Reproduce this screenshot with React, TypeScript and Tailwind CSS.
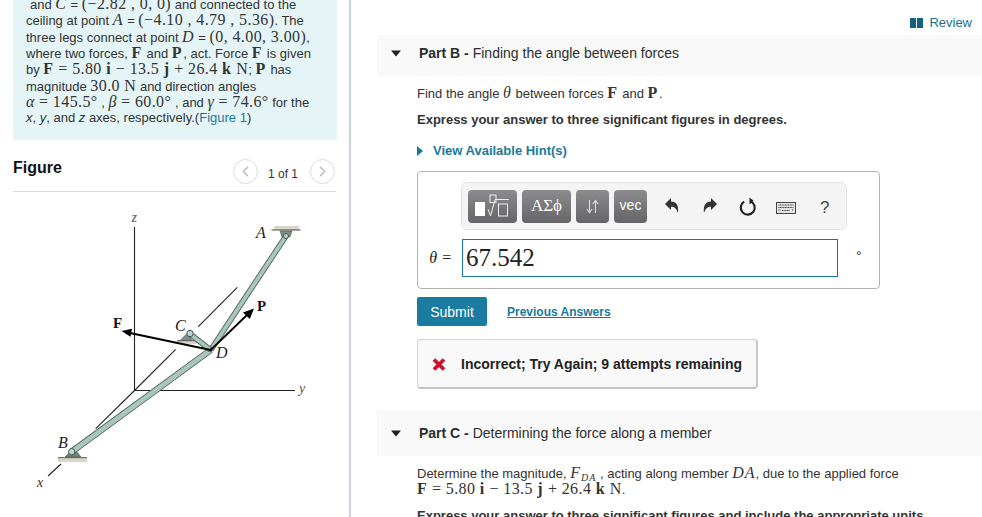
import React from "react";
import { ChevronLeft, ChevronRight } from "lucide-react";

const M = ({ children, b, i }: { children: React.ReactNode; b?: boolean; i?: boolean }) => (
  <span className={`font-['Liberation_Serif',serif] text-[16px] leading-none ${b ? "font-bold tracking-[1.6px]" : "tracking-[0.4px]"} ${i ? "italic tracking-[1px]" : ""}`}>
    {children}
  </span>
);

const Line = ({ className = "", children }: { className?: string; children: React.ReactNode }) => (
  <div className={`h-[16.33px] leading-[16.33px] ${className}`}>{children}</div>
);

const TopButton = ({ className, children }: { className: string; children: React.ReactNode }) => (
  <div className={`h-[33px] rounded-[4px] bg-gradient-to-b from-[#8c8c8e] to-[#656567] flex items-center justify-center text-white ${className}`}>
    {children}
  </div>
);

const Caret = () => (
  <svg width="12" height="7" viewBox="0 0 12 7" className="shrink-0">
    <path d="M1 0.5h10L6 6.5z" fill="#222" />
  </svg>
);

const PartHeader = ({ className, name, title }: { className: string; name: string; title: string }) => (
  <div className={`bg-[#f9f9f9] flex items-center pl-[13px] text-[14px] text-[#2d2d2d] ${className}`}>
    <Caret />
    <span className="ml-[17px]">
      <b className="font-bold">{name} - </b>
      {title}
    </span>
  </div>
);

const Figure = () => (
  <svg width="324" height="325" viewBox="13 192 324 325" className="block">
    <g stroke="#222" strokeWidth="1.1" fill="none">
      <path d="M134.5 227V390.5H295" />
      <path d="M134.5 390.5L95.7 428.7" />
      <path d="M61 464L48 476" />
      <path d="M175.7 349.3L134.5 390.5" />
      <path d="M198.3 326.7L237.3 287.3" />
    </g>
    {/* supports */}
    <rect x="274" y="226" width="25" height="4" fill="#d9d6c8" />
    <path d="M271.5 230H300.5" stroke="#444" strokeWidth="1" />
    <path d="M280 231h12l-2 6h-8z" fill="#7e8f8a" stroke="#444" strokeWidth="0.5" />
    <rect x="177" y="341" width="20" height="3" fill="#d9d6c8" />
    <path d="M177 340.7H197" stroke="#555" strokeWidth="1" />
    <path d="M180 340.5l7-7 5 7z" fill="#7e8f8a" stroke="#444" strokeWidth="0.5" />
    <rect x="58" y="458" width="29" height="4" fill="#d9d6c8" />
    <path d="M58 457.7H87" stroke="#555" strokeWidth="1" />
    <path d="M65 457l5-5h7l4 5z" fill="#6f817c" stroke="#444" strokeWidth="0.5" />
    {/* members */}
    <g fill="none">
      <path d="M71.7 451.7L210.7 350" stroke="#47594f" strokeWidth="6.5" />
      <path d="M71.7 451.7L210.7 350" stroke="#a9c6bc" strokeWidth="4.8" />
      <path d="M286 236L210.7 350" stroke="#47594f" strokeWidth="5.6" />
      <path d="M286 236L210.7 350" stroke="#a9c6bc" strokeWidth="4" />
      <path d="M190 334L210.7 350" stroke="#47594f" strokeWidth="5.6" />
      <path d="M190 334L210.7 350" stroke="#a9c6bc" strokeWidth="4" />
    </g>
    <circle cx="71.7" cy="451.7" r="3.2" fill="#bcd4d6" stroke="#47594f" />
    <circle cx="190" cy="333.5" r="3.2" fill="#bcd4d6" stroke="#47594f" />
    <circle cx="286" cy="236" r="2.5" fill="#bcd4d6" stroke="#47594f" />
    {/* forces */}
    <g stroke="#000" strokeWidth="1.8" fill="none">
      <path d="M210.7 350L130 333" />
      <path d="M210.7 350L247 315" />
    </g>
    <path d="M121.5 331L132 328.8L130.5 336.8z" fill="#000" />
    <path d="M254 308.5L249.8 319L243 312.5z" fill="#000" />
    <circle cx="210.7" cy="350" r="1.6" fill="#000" />
    <g fontFamily="'Liberation Serif', serif" fill="#222">
      <text x="113" y="328" fontSize="15" fontWeight="700" fill="#111">F</text>
      <text x="257" y="311" fontSize="15" fontWeight="700" fill="#111">P</text>
      <g fontStyle="italic" fontSize="16">
        <text x="256" y="238">A</text>
        <text x="175" y="331">C</text>
        <text x="216" y="358">D</text>
        <text x="58" y="448">B</text>
      </g>
      <g fontStyle="italic" fontSize="14" fill="#555">
        <text x="131.5" y="222">z</text>
        <text x="299" y="393">y</text>
        <text x="37" y="487" fill="#333">x</text>
      </g>
    </g>
  </svg>
);

export default function App() {
  return (
    <div className="w-[982px] h-[517px] overflow-hidden flex bg-white font-['Liberation_Sans',sans-serif] text-[#333]">
      {/* Left column */}
      <aside className="w-[351px] shrink-0 border-r-2 border-[#c8d3e0] pl-[13px] pr-[12px]">
        <div className="w-[324px] h-[144px] bg-[#e5f5f7] pl-[13px] text-[13px] -mt-[4px] whitespace-nowrap">
          <Line className="pl-[4px]">
            and <M i>C</M> = <M>(−2.82 , 0, 0)</M> and connected to the
          </Line>
          <Line>
            ceiling at point <M i>A</M> = <M>(−4.10 , 4.79 , 5.36)</M>. The
          </Line>
          <Line>
            three legs connect at point <M i>D</M> = <M>(0, 4.00, 3.00)</M>,
          </Line>
          <Line>
            where two forces, <M b>F</M> and <M b>P</M>, act. Force <M b>F</M> is given
          </Line>
          <Line>
            by <M b>F</M> <M>= 5.80 </M>
            <M b>i</M> <M>− 13.5 </M>
            <M b>j</M> <M>+ 26.4 </M>
            <M b>k</M> <M>N</M>; <M b>P</M> has
          </Line>
          <Line>
            magnitude <M>30.0 N</M> and direction angles
          </Line>
          <Line>
            <M i>α</M> <M>= 145.5°</M> , <M i>β</M> <M>= 60.0°</M> , and <M i>γ</M> <M>= 74.6°</M> for the
          </Line>
          <Line>
            <i>x</i>, <i>y</i>, and <i>z</i> axes, respectively.(<span className="text-[#1a7a9c]">Figure 1</span>)
          </Line>
        </div>

        <div className="flex items-center h-[52px] w-[323px] border-b border-[#d9dde0]">
          <span className="text-[16px] font-bold text-[#111] mt-[4px]">Figure</span>
          <div className="ml-auto flex items-center mt-[12px]">
            <span className="w-[25px] h-[25px] rounded-full border border-[#dcdcdc] flex items-center justify-center text-[#bbb]">
              <ChevronLeft size={17} />
            </span>
            <span className="text-[12px] ml-[10px] mr-[12px] mt-[4px] text-[#333]">1 of 1</span>
            <span className="w-[25px] h-[25px] rounded-full border border-[#dcdcdc] flex items-center justify-center text-[#bbb] mr-[1px]">
              <ChevronRight size={17} />
            </span>
          </div>
        </div>
        <Figure />
      </aside>

      {/* Right column */}
      <main className="flex-1 min-w-0 pl-[26px]">
        <div className="h-[35px] flex items-center justify-end pr-[10px] pt-[10px] text-[13px] text-[#1a6f8e] gap-[6px]">
          <svg width="13" height="10" viewBox="0 0 13 10">
            <path d="M0 0h6v10H0zM7 0h6v10H7z" fill="#14617f" />
          </svg>
          Review
        </div>

        <PartHeader className="h-[41px] pb-[4px]" name="Part B" title="Finding the angle between forces" />

        <div className="pl-[40px] w-[543px]">
          <p className="text-[13px] mt-[9px] h-[16px] leading-[16px] whitespace-nowrap">
            Find the angle <M i>θ</M> between forces <M b>F</M> and <M b>P</M>.
          </p>
          <p className="text-[13px] font-bold mt-[11px] h-[16px] leading-[16px] whitespace-nowrap">
            Express your answer to three significant figures in degrees.
          </p>
          <div className="flex items-center mt-[15px] h-[16px] text-[13px] font-bold text-[#1a7a9c]">
            <svg width="6" height="10" viewBox="0 0 6 10">
              <path d="M0 0l6 5-6 5z" fill="#1a7a9c" />
            </svg>
            <span className="ml-[10px]">View Available Hint(s)</span>
          </div>

          {/* Answer box */}
          <div className="mt-[12px] w-[463px] h-[118px] border border-[#b3b3b3] rounded-[4px] relative">
            <div className="ml-[43px] mt-[10px] w-[386px] h-[48px] bg-[#f4f4f4] border border-[#e2e2e2] rounded-[6px] flex items-center pl-[6px]">
              <TopButton className="w-[49px] gap-[2px]">
                <span className="w-[10px] h-[14px] bg-white mt-[5px]" />
                <svg width="23" height="27" viewBox="0 0 23 27" fill="none" stroke="#eee" strokeWidth="1">
                  <rect x="3" y="2" width="6" height="7.5" />
                  <path d="M1 16l2.5 7L8 6.5h14" />
                  <rect x="11.5" y="11" width="9" height="12" />
                </svg>
              </TopButton>
              <TopButton className="w-[49px] ml-[5px] font-['Liberation_Serif',serif] text-[17px] text-[#dedede]">ΑΣϕ</TopButton>
              <TopButton className="w-[33px] ml-[5px]">
                <svg width="15" height="15" viewBox="0 0 15 15" fill="none" stroke="#ddd" strokeWidth="1.1">
                  <path d="M4.5 1v12M1.8 10l2.7 3.5L7.2 10M10.5 14V2M7.8 5l2.7-3.5L13.2 5" />
                </svg>
              </TopButton>
              <TopButton className="w-[33px] ml-[5px] text-[14px] text-[#eee] !items-start pt-[5px]">vec</TopButton>
              <div className="relative flex-1 h-full text-[#333]">
                <svg className="absolute left-[18px] top-[15px]" width="14" height="15" viewBox="0 0 14 15">
                  <path d="M0 6L6 0V3.5C11 3.5 14 7 13 15C11.5 10.5 9.5 8.7 6 8.7V12Z" fill="#333" />
                </svg>
                <svg className="absolute left-[56px] top-[15px]" width="14" height="15" viewBox="0 0 14 15">
                  <path d="M14 6L8 0V3.5C3 3.5 0 7 1 15C2.5 10.5 4.5 8.7 8 8.7V12Z" fill="#333" />
                </svg>
                <svg className="absolute left-[92px] top-[14px]" width="18" height="19" viewBox="0 0 18 19" fill="none">
                  <path d="M5.2 4.6A7 7 0 1 0 11.5 4.2" stroke="#222" strokeWidth="2.2" />
                  <path d="M10.5 0.5v7l4-3.7z" fill="#222" />
                </svg>
                <svg className="absolute left-[129px] top-[19px]" width="20" height="12" viewBox="0 0 20 12">
                  <rect x="0.5" y="0.5" width="19" height="11" fill="#e4e4e4" stroke="#444" />
                  <path d="M2.5 3h15M2.5 5.5h15M2.5 8h2M6 8.5h8M16 8h1.5" stroke="#333" strokeWidth="1.2" strokeDasharray="1 0.6" />
                </svg>
                <span className="absolute left-[173px] top-[12px] text-[17px] text-[#444]">?</span>
              </div>
            </div>

            <div className="flex items-center mt-[9px]">
              <span className="w-[44px] text-right pr-[10px] whitespace-nowrap font-['Liberation_Serif',serif] text-[16px] tracking-[0.6px] text-[#222]">
                <i>θ</i> =
              </span>
              <div className="w-[376px] h-[38px] border border-[#14769a] flex items-center pl-[3px] font-['Liberation_Serif',serif] text-[25px] text-[#222]">
                67.542
              </div>
              <span className="ml-[18px] -mt-[4px] text-[14px] text-[#333]">°</span>
            </div>
          </div>

          <div className="flex mt-[8px]">
            <div className="w-[70px] h-[29px] rounded-[2px] bg-[#1a7ca0] text-white text-[14px] pt-[1px] flex items-center justify-center">
              Submit
            </div>
            <span className="ml-[20px] mt-[6px] text-[12px] font-bold text-[#1a7a9c] underline h-[16px]">Previous Answers</span>
          </div>

          <div className="mt-[13px] w-[341px] h-[50px] rounded-[4px] border border-[#d4d4d4] border-b-2 border-r-2 border-b-[#c4c4c4] border-r-[#c8c8c8] bg-[#f9f9f9] flex items-center pl-[14px] pt-[1px]">
            <svg width="14" height="13" viewBox="0 0 14 13" className="shrink-0">
              <path d="M2 1.5L12 11.5M12 1.5L2 11.5" stroke="#d0112b" strokeWidth="3.8" />
            </svg>
            <span className="ml-[15px] text-[14px] font-bold text-[#222] whitespace-nowrap">
              Incorrect; Try Again; 9 attempts remaining
            </span>
          </div>
        </div>

        <PartHeader className="h-[46px] mt-[21px]" name="Part C" title="Determining the force along a member" />

        <div className="pl-[40px] pt-[9px] text-[13px] whitespace-nowrap">
          <p className="h-[16px] leading-[15px]">
            Determine the magnitude, <M i>F<sub className="text-[10px]">DA</sub></M> , acting along member <M i>DA</M>, due to the applied force
          </p>
          <p className="h-[15px] leading-[15px]">
            <M b>F</M> <M>= 5.80 </M>
            <M b>i</M> <M>− 13.5 </M>
            <M b>j</M> <M>+ 26.4 </M>
            <M b>k</M> <M>N</M>.
          </p>
          <p className="font-bold mt-[12px] leading-[16px]">
            Express your answer to three significant figures and include the appropriate units.
          </p>
        </div>
      </main>
    </div>
  );
}
